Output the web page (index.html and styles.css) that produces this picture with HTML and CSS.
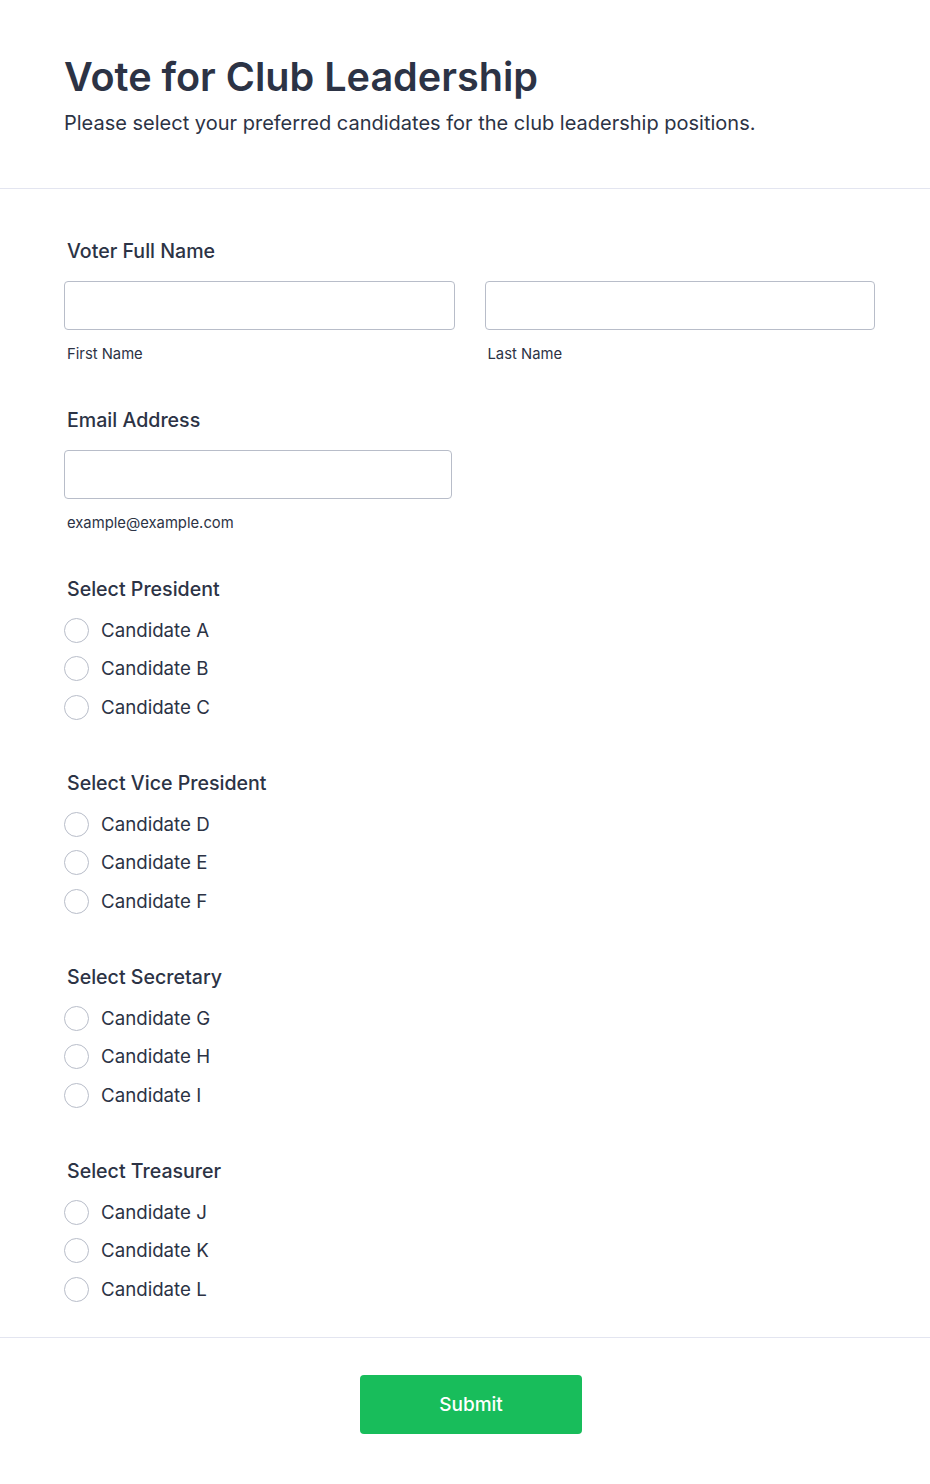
FILE: index.html
```html
<!DOCTYPE html>
<html>
<head>
    <title>Vote for Club Leadership</title>
    <link rel="stylesheet" href="styles.css">
</head>
<body>
    <form class="form" onsubmit="return false">
        <div class="form-header">
            <h1>Vote for Club Leadership</h1>
            <p>Please select your preferred candidates for the club leadership positions.</p>
        </div>

        <div class="form-body">
            <div class="field">
                <label class="field-label">Voter Full Name</label>
                <div class="two-cols">
                    <div>
                        <input type="text" id="first">
                        <label class="sublabel" for="first">First Name</label>
                    </div>
                    <div>
                        <input type="text" id="last">
                        <label class="sublabel" for="last">Last Name</label>
                    </div>
                </div>
            </div>

            <div class="field">
                <label class="field-label" for="email">Email Address</label>
                <div class="two-cols">
                    <div>
                        <input type="text" id="email" class="email">
                        <label class="sublabel" for="email">example@example.com</label>
                    </div>
                </div>
            </div>

            <div class="field choice">
                <label class="field-label">Select President</label>
                <div class="radios">
                    <label class="radio"><input type="radio" name="president"><span class="circle"></span>Candidate A</label>
                    <label class="radio"><input type="radio" name="president"><span class="circle"></span>Candidate B</label>
                    <label class="radio"><input type="radio" name="president"><span class="circle"></span>Candidate C</label>
                </div>
            </div>

            <div class="field choice">
                <label class="field-label">Select Vice President</label>
                <div class="radios">
                    <label class="radio"><input type="radio" name="vice"><span class="circle"></span>Candidate D</label>
                    <label class="radio"><input type="radio" name="vice"><span class="circle"></span>Candidate E</label>
                    <label class="radio"><input type="radio" name="vice"><span class="circle"></span>Candidate F</label>
                </div>
            </div>

            <div class="field choice">
                <label class="field-label">Select Secretary</label>
                <div class="radios">
                    <label class="radio"><input type="radio" name="secretary"><span class="circle"></span>Candidate G</label>
                    <label class="radio"><input type="radio" name="secretary"><span class="circle"></span>Candidate H</label>
                    <label class="radio"><input type="radio" name="secretary"><span class="circle"></span>Candidate I</label>
                </div>
            </div>

            <div class="field choice last">
                <label class="field-label">Select Treasurer</label>
                <div class="radios">
                    <label class="radio"><input type="radio" name="treasurer"><span class="circle"></span>Candidate J</label>
                    <label class="radio"><input type="radio" name="treasurer"><span class="circle"></span>Candidate K</label>
                    <label class="radio"><input type="radio" name="treasurer"><span class="circle"></span>Candidate L</label>
                </div>
            </div>
        </div>

        <div class="form-footer">
            <button class="btnSubmit" type="submit">Submit</button>
        </div>
    </form>
</body>
</html>
```

FILE: styles.css
```css
* {
    box-sizing: border-box;
}

body {
    margin: 0;
    padding: 0;
    font-family: Inter, "Noto Sans", sans-serif;
    color: #2c3345;
    background: #fff;
}

.form-header {
    padding: 53px 55px 51px 64px;
    border-bottom: 1px solid #e3e5f0;
}

.form-header h1 {
    margin: 0;
    font-size: 39.6px;
    line-height: 48px;
    font-weight: 600;
}

.form-header p {
    margin: 8px 0 0 0;
    font-size: 20px;
    line-height: 28px;
}

.form-body {
    padding: 48px 55px 0 64px;
}

.field {
    margin-bottom: 42px;
}

.field.choice {
    margin-bottom: 42.5px;
}

.field.last {
    margin-bottom: 28.5px;
}

.field-label {
    display: block;
    padding-left: 3px;
    font-size: 19.6px;
    line-height: 28px;
    font-weight: 500;
    margin-bottom: 16px;
}

.two-cols {
    display: grid;
    grid-template-columns: 1fr 1fr;
    column-gap: 30px;
}

.two-cols input[type="text"] {
    display: block;
    width: 100%;
    height: 49px;
    border: 1px solid #b8bdc9;
    border-radius: 4px;
    padding: 0 12px;
    font-size: 16px;
    font-family: inherit;
}

.two-cols input.email {
    width: 388px;
}

.sublabel {
    display: block;
    margin-top: 14px;
    padding-left: 3px;
    font-size: 14.8px;
    line-height: 20px;
    color: #2c3345;
}

.radios {
    margin-top: -8px;
}

.radio {
    display: flex;
    align-items: center;
    height: 38.5px;
    font-size: 18.7px;
    cursor: pointer;
}

.radio input {
    display: none;
}

.radio .circle {
    width: 25px;
    height: 25px;
    border: 1px solid #b8bdc9;
    border-radius: 50%;
    margin-right: 12px;
    flex-shrink: 0;
}

.radio input:checked + .circle {
    border: 7px solid #18bd5b;
}

.form-footer {
    border-top: 1px solid #e3e5f0;
    padding: 37px 0 50px 12px;
    display: flex;
    justify-content: center;
}

.btnSubmit {
    width: 222px;
    height: 59px;
    background-color: #18bd5b;
    color: white;
    border: none;
    border-radius: 4px;
    font-family: inherit;
    font-size: 19px;
    font-weight: 500;
    cursor: pointer;
}
```
